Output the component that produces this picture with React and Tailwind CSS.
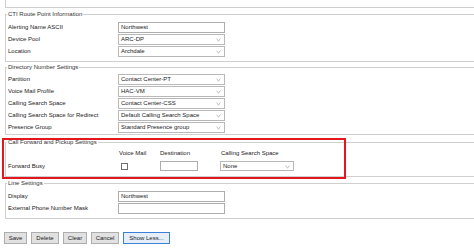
import React from "react";

function TextBox({ value, w = "w-[107px]", h = "h-[11px]" }) {
  return (
    <div className={`${w} ${h} border border-[#adadad] bg-white pl-[2px] text-[6px] leading-[9px] text-[#222] whitespace-nowrap overflow-hidden`}>
      {value}
    </div>
  );
}

function SelectBox({ value, w = "w-[107px]", h = "h-[11px]" }) {
  return (
    <div className={`relative ${w} ${h} border border-[#b8b8b8] bg-white pl-[2px] text-[6px] leading-[9px] text-[#222] whitespace-nowrap overflow-hidden`}>
      {value}
      <svg width="5" height="4" viewBox="0 0 5 4" className="absolute right-[3px] top-[3px]">
        <path d="M0.6 1 L2.5 2.8 L4.4 1" stroke="#8a8a8a" strokeWidth="0.7" fill="none" />
      </svg>
    </div>
  );
}

function Row({ label, children }) {
  return (
    <>
      <div className="text-[6px] leading-[11px] text-[#222] whitespace-nowrap">{label}</div>
      <div>{children}</div>
    </>
  );
}

function Legend({ children }) {
  return (
    <legend className="px-[1px] text-[6px] leading-[7px] text-[#333] whitespace-nowrap">{children}</legend>
  );
}

function Btn({ children, w, focus }) {
  return (
    <div
      className={`${w} h-[12px] flex items-center justify-center text-[6px] text-[#222] border ${
        focus ? "border-[#3c7fd6] bg-[#e5eef9]" : "border-[#adadad] bg-[#e1e1e1]"
      }`}
    >
      {children}
    </div>
  );
}

export default function App() {
  return (
    <div className="relative w-[474px] h-[250px] overflow-hidden bg-white font-['Liberation_Sans',Arial,sans-serif]">
      <div className="ml-[5px] w-[520px] h-[8px] border-l border-b border-[#cfcfcf]" />

      <fieldset className="mt-[3px] ml-[5px] w-[520px] border border-[#cfcfcf] pl-[1px] pt-[4px] pb-[4px]">
        <Legend>CTI Route Point Information</Legend>
        <div className="grid grid-cols-[110px_107px] gap-y-[1px] pl-[1px]">
          <Row label="Alerting Name ASCII"><TextBox value="Northwest" /></Row>
          <Row label="Device Pool"><SelectBox value="ARC-DP" /></Row>
          <Row label="Location"><SelectBox value="Archdale" /></Row>
        </div>
      </fieldset>

      <fieldset className="mt-[2px] ml-[5px] w-[520px] border border-[#cfcfcf] pl-[1px] pt-[3px] pb-[1px]">
        <Legend>Directory Number Settings</Legend>
        <div className="grid grid-cols-[110px_107px] gap-y-[1px] pl-[1px]">
          <Row label="Partition"><SelectBox value="Contact Center-PT" /></Row>
          <Row label="Voice Mail Profile"><SelectBox value="HAC-VM" /></Row>
          <Row label="Calling Search Space"><SelectBox value="Contact Center-CSS" /></Row>
          <Row label="Calling Search Space for Redirect"><SelectBox value="Default Calling Search Space" /></Row>
          <Row label="Presence Group"><SelectBox value="Standard Presence group" /></Row>
        </div>
      </fieldset>

      <fieldset className="mt-[4px] ml-[5px] w-[520px] border border-[#cfcfcf] pl-[1px] pt-[4px] pb-[5px]">
        <Legend>Call Forward and Pickup Settings</Legend>
        <div className="grid grid-cols-[110px_42px_60px_74px] pl-[1px] text-[6px] text-[#222]">
          <div className="h-[7px]" />
          <div className="leading-[7px] pl-[1px] whitespace-nowrap">Voice Mail</div>
          <div className="leading-[7px] whitespace-nowrap">Destination</div>
          <div className="leading-[7px] pl-[1px] whitespace-nowrap">Calling Search Space</div>
          <div className="mt-[4px] leading-[10px] whitespace-nowrap">Forward Busy</div>
          <div className="mt-[4px] h-[10px] flex items-center pl-[3px]">
            <div className="w-[7px] h-[7px] border border-[#6f6f6f] bg-white" />
          </div>
          <div className="mt-[4px]"><TextBox value="" w="w-[38px]" h="h-[10px]" /></div>
          <div className="mt-[4px]"><SelectBox value="None" w="w-[74px]" h="h-[10px]" /></div>
        </div>
      </fieldset>

      <fieldset className="mt-[3px] ml-[5px] w-[520px] border border-[#cfcfcf] pl-[1px] pt-[4px] pb-[4px]">
        <Legend>Line Settings</Legend>
        <div className="grid grid-cols-[110px_107px] gap-y-[1px] pl-[1px]">
          <Row label="Display"><TextBox value="Northwest" /></Row>
          <Row label="External Phone Number Mask"><TextBox value="" /></Row>
        </div>
      </fieldset>

      <div className="mt-[13px] ml-[4px] flex gap-[4px]">
        <Btn w="w-[23px]">Save</Btn>
        <Btn w="w-[28px]">Delete</Btn>
        <Btn w="w-[24px]">Clear</Btn>
        <Btn w="w-[28px]">Cancel</Btn>
        <Btn w="w-[47px]" focus>Show Less...</Btn>
      </div>

      <div className="absolute left-[2px] top-[138px] w-[344px] h-[41px] border-2 border-[#e3171e] pointer-events-none" />
    </div>
  );
}
